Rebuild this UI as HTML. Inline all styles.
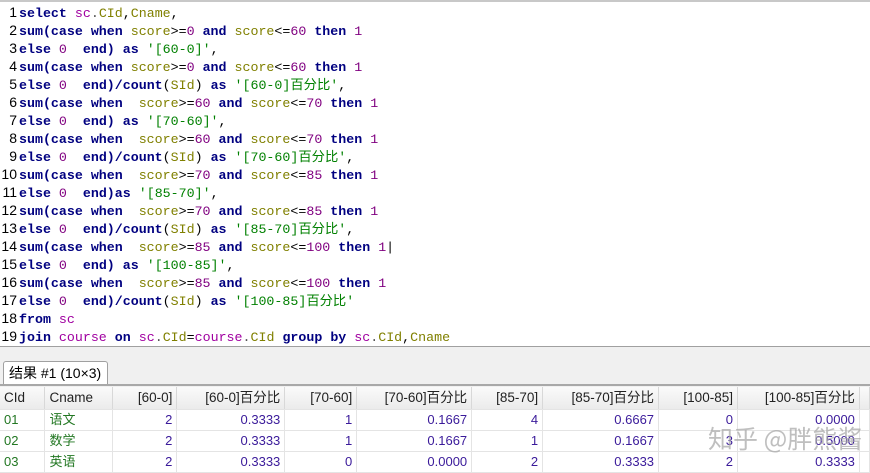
<!DOCTYPE html>
<html><head><meta charset="utf-8"><style>
body{margin:0;width:870px;height:471px;overflow:hidden;background:#fff;position:relative;font-family:"Liberation Sans","Noto Sans CJK SC",sans-serif}
#top{position:absolute;left:0;top:0;width:870px;height:2px;background:#c8c8c8}
#code{position:absolute;left:0;top:3px;font-family:"Liberation Mono","Noto Sans CJK SC",monospace;font-size:13.3px;color:#000}
#code div{height:18px;line-height:18px;white-space:pre;overflow:visible}
.ln{display:inline-block;width:17px;margin-right:2px;text-align:right;color:#000;font-family:"Liberation Sans",sans-serif;font-size:14px}
.k{color:#000080;font-weight:bold}.o{color:#808000}.n{color:#800080}.s{color:#008000}.m{color:#a000a0}.g{color:#555}
#sep{position:absolute;left:0;top:346px;width:870px;height:1px;background:#a0a0a0}
#gray{position:absolute;left:0;top:347px;width:870px;height:41px;background:#f0f0f0}
#tab{position:absolute;left:3px;top:361px;height:23px;padding:0 6px 0 5px;border:1px solid #a0a0a0;border-bottom:none;background:#fff;font-size:14px;line-height:23px;color:#000;border-radius:3px 3px 0 0}
#tline{position:absolute;left:0;top:384px;width:870px;height:2px;background:#a8a8a8}
table{position:absolute;left:0;top:387px;border-collapse:collapse;font-size:13px;table-layout:fixed}
td{height:20px;padding:0 4px;border-right:1px solid #e4e4e4;border-bottom:1px solid #e4e4e4;white-space:nowrap;overflow:hidden;text-align:right;color:#3a1a9a;line-height:20px}
tr.h td{height:22px;background:linear-gradient(#fafafa,#ebebeb);color:#222;font-size:13.5px;border-right:1px solid #d8d8d8}
td.l{text-align:left;color:#227722}
tr.h td.l{color:#222}
#wm{position:absolute;left:708px;top:424px;font-size:25px;line-height:28px;white-space:nowrap;color:rgba(170,170,170,.75);font-family:"Noto Sans CJK SC",sans-serif}
</style></head><body>
<div id="top"></div>
<div id="code">
<div><span class="ln">1</span><span class="k">select</span> <span class="m">sc</span><span class="g">.</span><span class="o">CId</span>,<span class="o">Cname</span>,</div>
<div><span class="ln">2</span><span class="k">sum(case when</span> <span class="o">score</span>&gt;=<span class="n">0</span> <span class="k">and</span> <span class="o">score</span>&lt;=<span class="n">60</span> <span class="k">then</span> <span class="n">1</span></div>
<div><span class="ln">3</span><span class="k">else</span> <span class="n">0</span>  <span class="k">end)</span> <span class="k">as</span> <span class="s">'[60-0]'</span>,</div>
<div><span class="ln">4</span><span class="k">sum(case when</span> <span class="o">score</span>&gt;=<span class="n">0</span> <span class="k">and</span> <span class="o">score</span>&lt;=<span class="n">60</span> <span class="k">then</span> <span class="n">1</span></div>
<div><span class="ln">5</span><span class="k">else</span> <span class="n">0</span>  <span class="k">end)/count</span>(<span class="o">SId</span>) <span class="k">as</span> <span class="s">'[60-0]百分比'</span>,</div>
<div><span class="ln">6</span><span class="k">sum(case when</span>  <span class="o">score</span>&gt;=<span class="n">60</span> <span class="k">and</span> <span class="o">score</span>&lt;=<span class="n">70</span> <span class="k">then</span> <span class="n">1</span></div>
<div><span class="ln">7</span><span class="k">else</span> <span class="n">0</span>  <span class="k">end)</span> <span class="k">as</span> <span class="s">'[70-60]'</span>,</div>
<div><span class="ln">8</span><span class="k">sum(case when</span>  <span class="o">score</span>&gt;=<span class="n">60</span> <span class="k">and</span> <span class="o">score</span>&lt;=<span class="n">70</span> <span class="k">then</span> <span class="n">1</span></div>
<div><span class="ln">9</span><span class="k">else</span> <span class="n">0</span>  <span class="k">end)/count</span>(<span class="o">SId</span>) <span class="k">as</span> <span class="s">'[70-60]百分比'</span>,</div>
<div><span class="ln">10</span><span class="k">sum(case when</span>  <span class="o">score</span>&gt;=<span class="n">70</span> <span class="k">and</span> <span class="o">score</span>&lt;=<span class="n">85</span> <span class="k">then</span> <span class="n">1</span></div>
<div><span class="ln">11</span><span class="k">else</span> <span class="n">0</span>  <span class="k">end)as</span> <span class="s">'[85-70]'</span>,</div>
<div><span class="ln">12</span><span class="k">sum(case when</span>  <span class="o">score</span>&gt;=<span class="n">70</span> <span class="k">and</span> <span class="o">score</span>&lt;=<span class="n">85</span> <span class="k">then</span> <span class="n">1</span></div>
<div><span class="ln">13</span><span class="k">else</span> <span class="n">0</span>  <span class="k">end)/count</span>(<span class="o">SId</span>) <span class="k">as</span> <span class="s">'[85-70]百分比'</span>,</div>
<div><span class="ln">14</span><span class="k">sum(case when</span>  <span class="o">score</span>&gt;=<span class="n">85</span> <span class="k">and</span> <span class="o">score</span>&lt;=<span class="n">100</span> <span class="k">then</span> <span class="n">1</span>|</div>
<div><span class="ln">15</span><span class="k">else</span> <span class="n">0</span>  <span class="k">end)</span> <span class="k">as</span> <span class="s">'[100-85]'</span>,</div>
<div><span class="ln">16</span><span class="k">sum(case when</span>  <span class="o">score</span>&gt;=<span class="n">85</span> <span class="k">and</span> <span class="o">score</span>&lt;=<span class="n">100</span> <span class="k">then</span> <span class="n">1</span></div>
<div><span class="ln">17</span><span class="k">else</span> <span class="n">0</span>  <span class="k">end)/count</span>(<span class="o">SId</span>) <span class="k">as</span> <span class="s">'[100-85]百分比'</span></div>
<div><span class="ln">18</span><span class="k">from</span> <span class="m">sc</span></div>
<div><span class="ln">19</span><span class="k">join</span> <span class="m">course</span> <span class="k">on</span> <span class="m">sc</span><span class="g">.</span><span class="o">CId</span>=<span class="m">course</span><span class="g">.</span><span class="o">CId</span> <span class="k">group by</span> <span class="m">sc</span><span class="g">.</span><span class="o">CId</span>,<span class="o">Cname</span></div>
</div>
<div id="sep"></div>
<div id="gray"></div>
<div id="tab">结果 #1 (10×3)</div>
<div id="tline"></div>
<table>
<colgroup><col style="width:45px"><col style="width:68px"><col style="width:64px"><col style="width:108px"><col style="width:72px"><col style="width:115px"><col style="width:71px"><col style="width:116px"><col style="width:79px"><col style="width:122px"><col style="width:10px"></colgroup>
<tr class="h"><td class="l">CId</td><td class="l">Cname</td><td>[60-0]</td><td>[60-0]百分比</td><td>[70-60]</td><td>[70-60]百分比</td><td>[85-70]</td><td>[85-70]百分比</td><td>[100-85]</td><td>[100-85]百分比</td><td></td></tr>
<tr><td class="l">01</td><td class="l">语文</td><td>2</td><td>0.3333</td><td>1</td><td>0.1667</td><td>4</td><td>0.6667</td><td>0</td><td>0.0000</td><td></td></tr>
<tr><td class="l">02</td><td class="l">数学</td><td>2</td><td>0.3333</td><td>1</td><td>0.1667</td><td>1</td><td>0.1667</td><td>3</td><td>0.5000</td><td></td></tr>
<tr><td class="l">03</td><td class="l">英语</td><td>2</td><td>0.3333</td><td>0</td><td>0.0000</td><td>2</td><td>0.3333</td><td>2</td><td>0.3333</td><td></td></tr>
</table>
<div id="wm">知乎 @胖熊酱</div>
</body></html>
